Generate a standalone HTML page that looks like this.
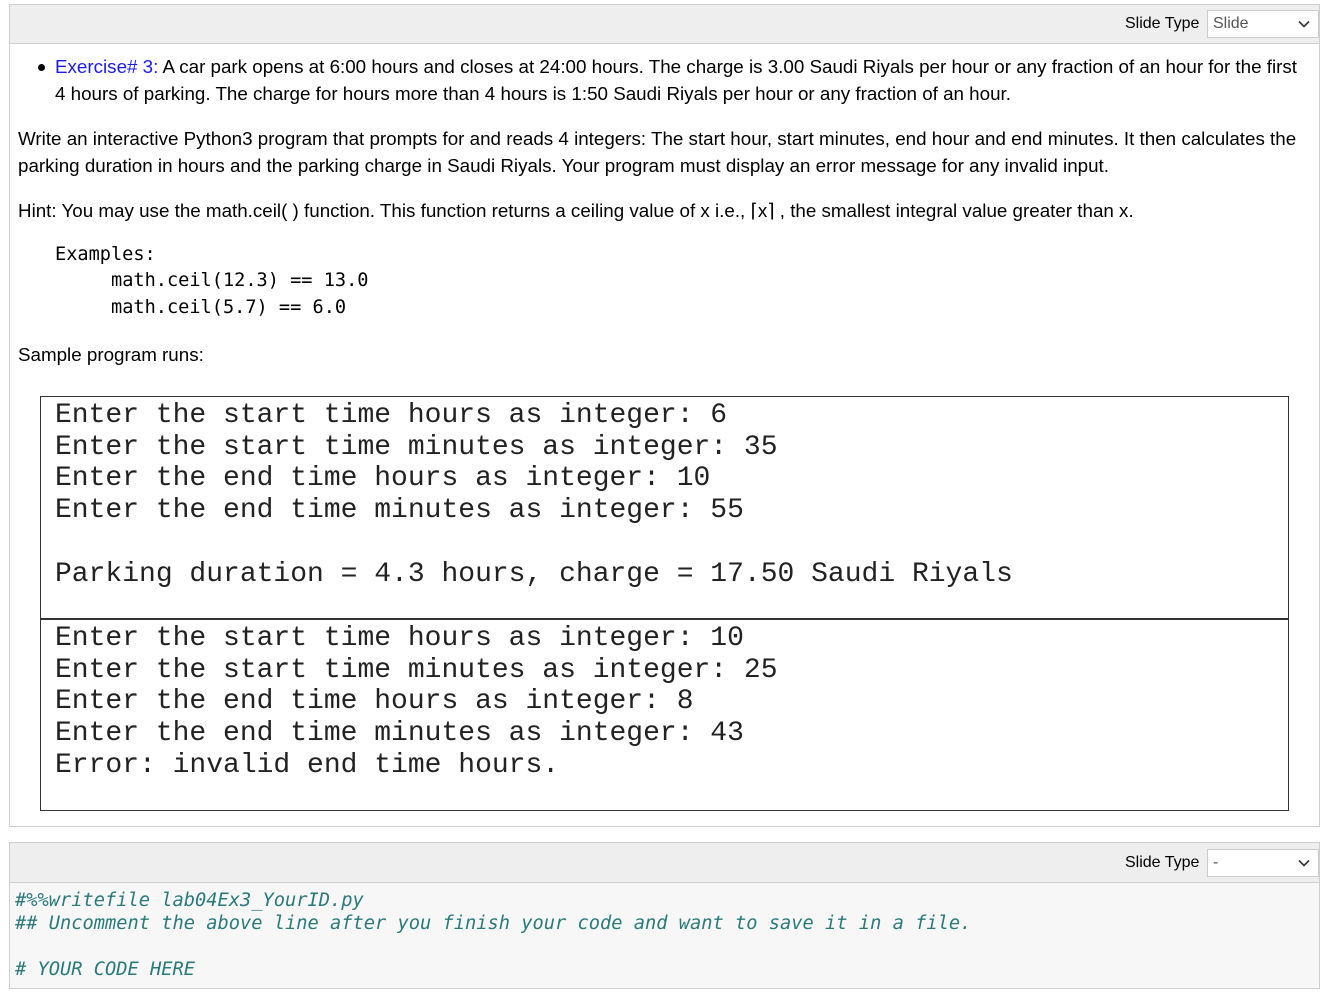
<!DOCTYPE html>
<html><head><meta charset="utf-8"><style>
body{margin:0;width:1328px;height:998px;background:#fff;position:relative;overflow:hidden;font-family:"Liberation Sans",Arial,sans-serif;color:#000}
.a{position:absolute;white-space:pre}
.cell{position:absolute;border:1px solid #cfcfcf;box-sizing:border-box}
.hdr{position:absolute;left:0;right:0;top:0;background:#eee;border-bottom:1px solid #cfcfcf}
.sel{position:absolute;width:112px;height:28px;background:#fff;border:1px solid #ccc;box-sizing:border-box;font-size:16px;line-height:26px;padding-left:5px;color:#555}
.sel svg{position:absolute;right:8px;top:9px}
.lbl{position:absolute;font-size:16px;color:#000}
.t{font-size:18.8px;line-height:27px}
.m{font-family:"DejaVu Sans Mono",monospace;font-size:18.6px}
.c{font-family:"Liberation Mono","Courier New",monospace;font-size:28px;color:#222}
.i{font-family:"DejaVu Sans Mono",monospace;font-style:italic;font-size:18.7px;color:#2a7a7a}
</style></head><body>
<div class="cell" style="left:9px;top:4px;width:1311px;height:823px">
 <div class="hdr" style="height:38px"></div>
 <div class="lbl" style="left:1115px;top:10px">Slide Type</div>
 <div class="sel" style="left:1197px;top:5px">Slide<svg width="12" height="8" viewBox="0 0 12 8"><path d="M1 1.5L6 6.5L11 1.5" fill="none" stroke="#333" stroke-width="1.6"/></svg></div>
</div>
<div style="position:absolute;left:38px;top:64px;width:7px;height:7px;border-radius:50%;background:#000"></div>
<div class="a t" style="left:55px;top:53px"><span style="color:#1a1aee">Exercise# 3:</span> A car park opens at 6:00 hours and closes at 24:00 hours. The charge is 3.00 Saudi Riyals per hour or any fraction of an hour for the first</div>
<div class="a t" style="left:55px;top:80px">4 hours of parking. The charge for hours more than 4 hours is 1:50 Saudi Riyals per hour or any fraction of an hour.</div>
<div class="a t" style="left:18px;top:125px">Write an interactive Python3 program that prompts for and reads 4 integers: The start hour, start minutes, end hour and end minutes. It then calculates the</div>
<div class="a t" style="left:18px;top:152px">parking duration in hours and the parking charge in Saudi Riyals. Your program must display an error message for any invalid input.</div>
<div class="a t" style="left:18px;top:197px">Hint: You may use the math.ceil( ) function. This function returns a ceiling value of x i.e., ⌈x⌉ , the smallest integral value greater than x.</div>
<div class="a m" style="left:55px;top:244px">Examples:</div>
<div class="a m" style="left:111px;top:270px">math.ceil(12.3) == 13.0</div>
<div class="a m" style="left:111px;top:297px">math.ceil(5.7) == 6.0</div>
<div class="a t" style="left:18px;top:341px">Sample program runs:</div>
<div style="position:absolute;left:40px;top:396px;width:1249px;height:415px;border:1.5px solid #333;box-sizing:border-box"></div>
<div style="position:absolute;left:40px;top:618px;width:1249px;height:1.5px;background:#333"></div>
<div class="a c" style="left:55px;top:400px;line-height:31.7px">Enter the start time hours as integer: 6
Enter the start time minutes as integer: 35
Enter the end time hours as integer: 10
Enter the end time minutes as integer: 55

Parking duration = 4.3 hours, charge = 17.50 Saudi Riyals</div>
<div class="a c" style="left:55px;top:623px;line-height:31.7px">Enter the start time hours as integer: 10
Enter the start time minutes as integer: 25
Enter the end time hours as integer: 8
Enter the end time minutes as integer: 43
Error: invalid end time hours.</div>
<div class="cell" style="left:9px;top:842px;width:1311px;height:147px;background:#f7f7f7">
 <div class="hdr" style="height:39px"></div>
 <div class="lbl" style="left:1115px;top:11px">Slide Type</div>
 <div class="sel" style="left:1197px;top:6px">-<svg width="12" height="8" viewBox="0 0 12 8"><path d="M1 1.5L6 6.5L11 1.5" fill="none" stroke="#333" stroke-width="1.6"/></svg></div>
</div>
<div class="a i" style="left:15px;top:889px;line-height:23px">#%%writefile lab04Ex3_YourID.py
## Uncomment the above line after you finish your code and want to save it in a file.

# YOUR CODE HERE</div>
</body></html>
